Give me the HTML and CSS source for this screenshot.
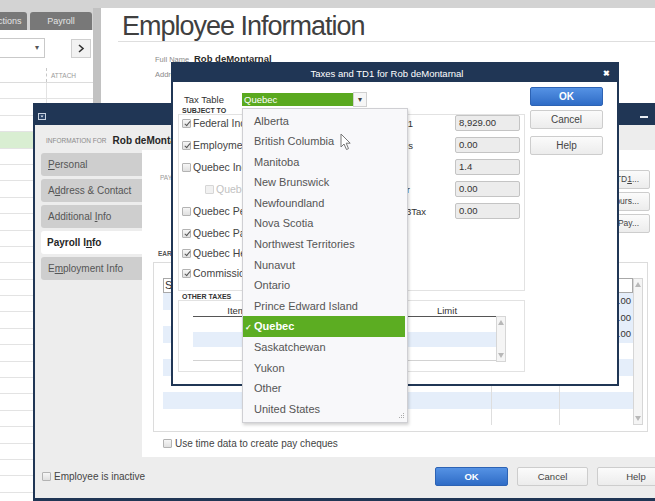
FILE: index.html
```html
<!DOCTYPE html>
<html>
<head>
    <meta charset="UTF-8" />
    <title>Employee Information</title>
    <link rel="stylesheet" href="styles.css">
</head>
<body>
    <div class="toolbar"></div>
    <div class="app-main">
        <div class="list-pane">
            <div class="pane-tabs">
                <span class="pane-tab cut">Transactions</span>
                <span class="pane-tab">Payroll</span>
            </div>
            <div class="pane-filter">
                <div class="pane-select">&#9662;</div>
                <div class="pane-next">
                    <svg width="8" height="9" viewBox="0 0 8 9"><path d="M2 1 L6 4.5 L2 8" fill="none" stroke="#333" stroke-width="1.6"/></svg>
                </div>
            </div>
            <div class="pane-head"><span class="pane-name"></span><span class="pane-attach">ATTACH</span></div>
            <div class="pane-row"><span class="pane-name"></span><span class="pane-attach"></span></div>
            <div class="pane-row"><span class="pane-name"></span><span class="pane-attach"></span></div>
            <div class="pane-row"><span class="pane-name"></span><span class="pane-attach"></span></div>
            <div class="pane-row picked"><span class="pane-name"></span><span class="pane-attach"></span></div>
            <div class="pane-row"><span class="pane-name"></span><span class="pane-attach"></span></div>
            <div class="pane-row"><span class="pane-name"></span><span class="pane-attach"></span></div>
            <div class="pane-row"><span class="pane-name"></span><span class="pane-attach"></span></div>
            <div class="pane-row"><span class="pane-name"></span><span class="pane-attach"></span></div>
            <div class="pane-row"><span class="pane-name"></span><span class="pane-attach"></span></div>
            <div class="pane-row"><span class="pane-name"></span><span class="pane-attach"></span></div>
            <div class="pane-row"><span class="pane-name"></span><span class="pane-attach"></span></div>
            <div class="pane-row"><span class="pane-name"></span><span class="pane-attach"></span></div>
            <div class="pane-row"><span class="pane-name"></span><span class="pane-attach"></span></div>
            <div class="pane-row"><span class="pane-name"></span><span class="pane-attach"></span></div>
            <div class="pane-row"><span class="pane-name"></span><span class="pane-attach"></span></div>
            <div class="pane-row"><span class="pane-name"></span><span class="pane-attach"></span></div>
            <div class="pane-row"><span class="pane-name"></span><span class="pane-attach"></span></div>
            <div class="pane-row"><span class="pane-name"></span><span class="pane-attach"></span></div>
            <div class="pane-row"><span class="pane-name"></span><span class="pane-attach"></span></div>
            <div class="pane-row"><span class="pane-name"></span><span class="pane-attach"></span></div>
            <div class="pane-row"><span class="pane-name"></span><span class="pane-attach"></span></div>
            <div class="pane-row"><span class="pane-name"></span><span class="pane-attach"></span></div>
            <div class="pane-row"><span class="pane-name"></span><span class="pane-attach"></span></div>
            <div class="pane-row"><span class="pane-name"></span><span class="pane-attach"></span></div>
            <div class="pane-row"><span class="pane-name"></span><span class="pane-attach"></span></div>
        </div>
        <div class="pane-scroll"></div>
        <div class="record">
            <h1 class="record-title">Employee Information</h1>
            <div class="record-field"><span class="record-label">Full Name</span><span class="record-value">Rob deMontarnal</span></div>
            <div class="record-field"><span class="record-label">Address</span></div>
        </div>
    </div>

    <!-- employee edit window -->
    <div class="window employee">
        <div class="titlebar emp-title">
            <svg class="sys-icon" width="8" height="7" viewBox="0 0 8 7"><rect x="0.5" y="0.5" width="7" height="6" fill="#2b4468" stroke="#c9d3e0"/><path d="M2.5 2.5 L5.5 2.5 L4 4.5 Z" fill="#dfe6ef"/></svg>
            <span class="minimize"></span>
        </div>
        <div class="emp-body">
            <div class="info-for"><span class="info-label">INFORMATION FOR</span><span class="info-name">Rob deMontarnal</span></div>
            <div class="emp-main">
                <div class="emp-tabs">
                    <div class="emp-tab"><u>P</u>ersonal</div>
                    <div class="emp-tab">A<u>d</u>dress &amp; Contact</div>
                    <div class="emp-tab">Additional <u>I</u>nfo</div>
                    <div class="emp-tab active">Payroll I<u>n</u>fo</div>
                    <div class="emp-tab">E<u>m</u>ployment Info</div>
                </div>
                <div class="emp-panel">
                    <div class="panel-top">
                        <div class="section-label">PAYROLL SCHEDULE</div>
                        <div class="side-buttons">
                            <div class="btn side">Taxes and TD<u>1</u>...</div>
                            <div class="btn side">Leave Hours...</div>
                            <div class="btn side">Direct Deposit Pay...</div>
                        </div>
                    </div>
                    <div class="section-label strong">EARNINGS</div>
                    <div class="earnings-box">
                        <div class="earn-table">
                            <div class="earn-row head"><span class="c1">S</span><span class="c2">Rate</span><span class="c3"></span></div>
                            <div class="earn-row alt"><span class="c1"></span><span class="c2"></span><span class="c3 hl">1,000.00</span></div>
                            <div class="earn-row"><span class="c1"></span><span class="c2"></span><span class="c3 hl">1,000.00</span></div>
                            <div class="earn-row alt"><span class="c1"></span><span class="c2"></span><span class="c3 hl">1,000.00</span></div>
                            <div class="earn-row"><span class="c1"></span><span class="c2"></span><span class="c3"></span></div>
                            <div class="earn-row alt"><span class="c1"></span><span class="c2"></span><span class="c3"></span></div>
                            <div class="earn-row"><span class="c1"></span><span class="c2"></span><span class="c3"></span></div>
                            <div class="earn-row alt"><span class="c1"></span><span class="c2"></span><span class="c3"></span></div>
                            <div class="earn-row"><span class="c1"></span><span class="c2"></span><span class="c3"></span></div>
                        </div>
                        <div class="scrollbar tall">
                            <span class="arrow up"></span>
                            <span class="arrow down"></span>
                        </div>
                    </div>
                    <div class="check-row time-data"><span class="cb"></span>Use time data to create pay cheques</div>
                </div>
            </div>
            <div class="emp-footer">
                <div class="check-row"><span class="cb"></span>Employee is inactive</div>
                <div class="footer-buttons">
                    <div class="btn primary ok">OK</div>
                    <div class="btn cancel">Cancel</div>
                    <div class="btn help">Help</div>
                </div>
            </div>
        </div>
    </div>

    <!-- taxes dialog -->
    <div class="window taxes">
        <div class="titlebar dialog-title">
            <span class="dialog-caption">Taxes and TD1 for Rob deMontarnal</span>
            <span class="close">&#10006;</span>
        </div>
        <div class="taxes-body">
            <div class="taxes-main">
                <div class="tax-table-row">
                    <span class="tax-label">Tax Table</span>
                    <div class="combo">
                        <span class="combo-value">Quebec</span>
                        <span class="combo-arrow">&#9662;</span>
                    </div>
                </div>
                <div class="group-label">SUBJECT TO</div>
                <div class="group-box subject">
                    <div class="subject-list">
                        <div class="check-row sub"><span class="cb on"></span>Federal Income</div>
                        <div class="check-row sub"><span class="cb on"></span>Employment</div>
                        <div class="check-row sub"><span class="cb"></span>Quebec Income</div>
                        <div class="check-row sub nested"><span class="cb"></span>Quebec</div>
                        <div class="check-row sub"><span class="cb"></span>Quebec Pension</div>
                        <div class="check-row sub tight"><span class="cb on"></span>Quebec Parental</div>
                        <div class="check-row sub tight"><span class="cb on"></span>Quebec Health</div>
                        <div class="check-row sub tight"><span class="cb on"></span>Commission</div>
                    </div>
                    <div class="claim-list">
                        <div class="claim"><span class="claim-label">TD1</span><span class="field">8,929.00</span></div>
                        <div class="claim"><span class="claim-label">Claims</span><span class="field">0.00</span></div>
                        <div class="claim"><span class="claim-label"></span><span class="field">1.4</span></div>
                        <div class="claim"><span class="claim-label short">Factor</span><span class="field">0.00</span></div>
                        <div class="claim"><span class="claim-label long">TP-1015.3Tax</span><span class="field">0.00</span></div>
                    </div>
                </div>
                <div class="group-label">OTHER TAXES</div>
                <div class="group-box other">
                    <div class="other-table">
                        <div class="other-row head"><span class="o1">Item</span><span class="o2">Rate</span><span class="o3">Limit</span></div>
                        <div class="other-row"></div>
                        <div class="other-row alt"></div>
                        <div class="other-row last"></div>
                    </div>
                    <div class="scrollbar short">
                        <span class="arrow up"></span>
                        <span class="arrow down"></span>
                    </div>
                </div>
            </div>
            <div class="taxes-buttons">
                <div class="btn primary">OK</div>
                <div class="btn cancel-small">Cancel</div>
                <div class="btn help-small">Help</div>
            </div>
        </div>
    </div>

    <!-- open drop-down list of the Tax Table combo -->
    <ul class="dropdown">
        <li><span class="tick"></span>Alberta</li>
        <li><span class="tick"></span>British Columbia</li>
        <li><span class="tick"></span>Manitoba</li>
        <li><span class="tick"></span>New Brunswick</li>
        <li><span class="tick"></span>Newfoundland</li>
        <li><span class="tick"></span>Nova Scotia</li>
        <li><span class="tick"></span>Northwest Territories</li>
        <li><span class="tick"></span>Nunavut</li>
        <li><span class="tick"></span>Ontario</li>
        <li><span class="tick"></span>Prince Edward Island</li>
        <li class="selected"><span class="tick">&#10003;</span>Quebec</li>
        <li><span class="tick"></span>Saskatchewan</li>
        <li><span class="tick"></span>Yukon</li>
        <li><span class="tick"></span>Other</li>
        <li><span class="tick"></span>United States</li>
        <svg class="grip" width="8" height="8" viewBox="0 0 8 8">
            <rect x="6" y="1" width="1" height="1" fill="#aaa"/><rect x="4" y="3" width="1" height="1" fill="#aaa"/>
            <rect x="6" y="3" width="1" height="1" fill="#aaa"/><rect x="2" y="5" width="1" height="1" fill="#aaa"/>
            <rect x="4" y="5" width="1" height="1" fill="#aaa"/><rect x="6" y="5" width="1" height="1" fill="#aaa"/>
        </svg>
    </ul>

    <svg class="cursor" width="12" height="18" viewBox="0 0 12 18">
        <path d="M1 1 L1 14 L4 11 L6.5 16.5 L8.5 15.6 L6.2 10.2 L10.2 10.2 Z" fill="#fff" stroke="#777" stroke-width="1" stroke-linejoin="round"/>
    </svg>
</body>
</html>
```

FILE: styles.css
```css
* {
    box-sizing: border-box;
}

body {
    margin: 0;
    width: 655px;
    height: 501px;
    overflow: hidden;
    position: relative;
    font-family: "Liberation Sans", Arial, sans-serif;
    color: #444;
    background: #ffffff;
}

/* background application */

.toolbar {
    height: 8px;
    background: #d3d3d3;
}

.app-main {
    display: flex;
    height: 493px;
}

.list-pane {
    width: 93px;
    flex: none;
}

.pane-tabs {
    height: 22px;
    background: #d3d3d3;
    display: flex;
    align-items: flex-end;
    gap: 3px;
    overflow: hidden;
}

.pane-tab {
    flex: none;
    width: 62px;
    height: 18px;
    line-height: 18px;
    text-align: center;
    font-size: 9px;
    color: #e4e4e4;
    background: #787878;
    border-radius: 3px 3px 0 0;
    white-space: nowrap;
}

.pane-tab.cut {
    margin-left: -35px;
}

.pane-filter {
    height: 38px;
    padding-top: 8px;
    display: flex;
    align-items: flex-start;
    justify-content: space-between;
}

.pane-select {
    width: 45px;
    height: 20px;
    border: 1px solid #c9c9c9;
    border-left: none;
    text-align: right;
    padding-right: 5px;
    font-size: 8px;
    line-height: 18px;
    color: #555;
}

.pane-next {
    width: 20px;
    height: 19px;
    margin: 1px 2px 0 0;
    border: 1px solid #cfcfcf;
    background: #f2f2f2;
    display: flex;
    align-items: center;
    justify-content: center;
}

.pane-head,
.pane-row {
    display: flex;
    height: 16.4px;
    border-bottom: 1px solid #e3e3e3;
}

.pane-head {
    height: 15px;
    border-bottom-color: #dcdcdc;
}

.pane-name {
    width: 46px;
}

.pane-attach {
    flex: 1;
    border-left: 1px solid #e3e3e3;
    font-size: 6.5px;
    line-height: 15px;
    padding-left: 4px;
    color: #9a9a9a;
}

.pane-head .pane-attach {
    border-left: 1px dashed #c8c8c8;
}

.pane-row.picked {
    background: #d9eed2;
}

.pane-scroll {
    width: 8px;
    flex: none;
    background: #c2c2c2;
}

.record {
    flex: 1;
    padding-left: 17px;
}

.record-title {
    margin: 0;
    height: 34px;
    line-height: 36px;
    padding-left: 4px;
    font-size: 27px;
    font-weight: normal;
    letter-spacing: -1px;
    color: #404040;
    border-bottom: 1px solid #dedede;
}

.record-field {
    display: flex;
    align-items: baseline;
    height: 16px;
    line-height: 16px;
    padding-left: 37px;
}

.record-field:first-of-type {
    margin-top: 9px;
}

.record-label {
    width: 39px;
    font-size: 7.5px;
    color: #8a8a8a;
}

.record-value {
    font-size: 9.5px;
    font-weight: bold;
    color: #2a2a2a;
}

/* shared window parts */

.window {
    position: absolute;
    background: #ffffff;
    border: 2px solid #203655;
}

.titlebar {
    background: #203655;
    color: #ffffff;
}

.btn {
    height: 19px;
    line-height: 17px;
    text-align: center;
    font-size: 10px;
    color: #444;
    border: 1px solid #cdcdcd;
    border-radius: 2px;
    background: linear-gradient(#fbfbfb, #ececec);
    white-space: nowrap;
    overflow: hidden;
}

.btn.primary {
    color: #ffffff;
    font-weight: bold;
    border-color: #2d63b4;
    background: linear-gradient(#5592e4, #2f6cc6);
}

.check-row {
    display: flex;
    align-items: center;
    gap: 3px;
    font-size: 10px;
    color: #444;
    white-space: nowrap;
}

.cb {
    position: relative;
    flex: none;
    width: 9px;
    height: 9px;
    border: 1px solid #b3b3b3;
    border-radius: 1px;
    background: linear-gradient(#f6f6f6, #e0e0e0);
}

.cb.on::after {
    content: "";
    position: absolute;
    left: 2.5px;
    top: 0;
    width: 2px;
    height: 5px;
    border: solid #555;
    border-width: 0 1.5px 1.5px 0;
    transform: rotate(40deg);
}

.scrollbar {
    position: relative;
    width: 10px;
    flex: none;
    border: 1px solid #d6d6d6;
    background: #f5f5f5;
}

.arrow {
    position: absolute;
    left: 1px;
    width: 0;
    height: 0;
    border-left: 3.5px solid transparent;
    border-right: 3.5px solid transparent;
}

.arrow.up {
    top: 3px;
    border-bottom: 5px solid #b8b8b8;
}

.arrow.down {
    bottom: 3px;
    border-top: 5px solid #b8b8b8;
}

/* employee window */

.employee {
    left: 33px;
    top: 103px;
    width: 632px;
    height: 398px;
    border-width: 0 2px 3px 2px;
    background: #ededed;
}

.emp-title {
    height: 22px;
    display: flex;
    align-items: center;
    justify-content: space-between;
    padding: 5px 15px 0 3px;
}

.minimize {
    width: 8px;
    height: 2px;
    background: #e8edf3;
}

.info-for {
    margin-top: 8px;
    height: 14px;
    padding-left: 11px;
    display: flex;
    align-items: center;
    gap: 6px;
}

.info-label {
    font-size: 6.5px;
    color: #8a8a8a;
}

.info-name {
    font-size: 10px;
    font-weight: bold;
    color: #262626;
}

.emp-main {
    margin-top: 3px;
    height: 307px;
    display: flex;
}

.emp-tabs {
    width: 101px;
    margin-left: 6px;
    padding-top: 3px;
    flex: none;
}

.emp-tab {
    height: 23px;
    margin-bottom: 3px;
    padding-left: 7px;
    line-height: 23px;
    font-size: 10px;
    color: #555;
    background: #cecece;
    border-radius: 3px 0 0 3px;
}

.emp-tab.active {
    background: #ffffff;
    font-weight: bold;
    color: #262626;
    padding-left: 6px;
}

.emp-panel {
    flex: 1;
    margin-right: 8px;
    background: #ffffff;
}

.panel-top {
    height: 100px;
    padding: 20px 5px 0 18px;
    display: flex;
    justify-content: space-between;
    align-items: flex-start;
}

.section-label {
    margin-top: 4px;
    font-size: 6.5px;
    color: #999;
}

.section-label.strong {
    margin: 0;
    height: 7px;
    line-height: 7px;
    padding-left: 16px;
    font-weight: bold;
    color: #555;
}

.side-buttons {
    display: flex;
    flex-direction: column;
    gap: 3px;
}

.btn.side {
    width: 105px;
    text-align: right;
    padding-right: 10px;
    font-size: 8.5px;
}

.earnings-box {
    margin: 5px 7px 0 11px;
    height: 170px;
    border: 1px solid #dcdcdc;
    padding: 15px 4px 0 9px;
    display: flex;
}

.earn-table {
    flex: 1;
}

.earn-row {
    display: flex;
    height: 16.5px;
    font-size: 9.5px;
    line-height: 16px;
    color: #333;
}

.earn-row.head {
    height: 15px;
    line-height: 13px;
}

.earn-row.head span {
    border: 1px solid #a8a8a8;
    border-left: none;
    background: #ffffff;
    text-align: center;
}

.earn-row.head .c1 {
    border-left: 1px solid #a8a8a8;
    text-align: left;
    padding-left: 1px;
    font-size: 11px;
}

.earn-row.alt {
    background: #e5eefa;
}

.c1 {
    width: 329px;
    border-right: 1px solid #dedede;
    overflow: hidden;
}

.c2 {
    width: 68px;
    border-right: 1px solid #dedede;
    overflow: hidden;
}

.c3 {
    flex: 1;
    text-align: right;
    padding-right: 2px;
    overflow: hidden;
}

.c3.hl {
    background: #e5eefa;
}

.scrollbar.tall {
    height: 147px;
}

.time-data {
    margin: 6px 0 0 21px;
    height: 10px;
}

.emp-footer {
    height: 41px;
    display: flex;
    align-items: center;
    justify-content: space-between;
    padding: 0 0 3px 7px;
}

.footer-buttons {
    display: flex;
    gap: 9px;
}

.footer-buttons .btn {
    font-size: 9.5px;
}

.footer-buttons .ok {
    width: 73px;
}

.footer-buttons .cancel {
    width: 71px;
}

.footer-buttons .help {
    width: 66px;
    padding-left: 12px;
}

/* taxes and TD1 dialog */

.taxes {
    left: 171px;
    top: 62px;
    width: 448px;
    height: 324px;
}

.dialog-title {
    height: 18px;
    display: flex;
    align-items: center;
}

.dialog-caption {
    flex: 1;
    text-align: center;
    font-size: 9.5px;
    padding-left: 4px;
}

.close {
    width: 20px;
    font-size: 8px;
    font-weight: bold;
    text-align: center;
    padding-right: 2px;
}

.taxes-body {
    display: flex;
    padding: 5px 14px 0 5px;
}

.taxes-main {
    width: 347px;
    flex: none;
}

.tax-table-row {
    margin-top: 5px;
    height: 15px;
    display: flex;
    align-items: center;
}

.tax-label {
    width: 64px;
    padding-left: 6px;
    font-size: 9.5px;
    color: #333;
}

.combo {
    display: flex;
    align-items: center;
}

.combo-value {
    width: 111px;
    height: 13px;
    line-height: 13px;
    padding-left: 2px;
    font-size: 9.5px;
    color: #ffffff;
    background: #5aa91f;
}

.combo-arrow {
    width: 14px;
    height: 15px;
    line-height: 14px;
    text-align: center;
    font-size: 8px;
    color: #444;
    border: 1px solid #d0d0d0;
    background: #f6f6f6;
}

.group-label {
    height: 7px;
    line-height: 7px;
    padding-left: 4px;
    font-size: 7px;
    font-weight: bold;
    color: #333;
}

.group-box {
    border: 1px solid #e2e2e2;
    display: flex;
}

.group-box.subject {
    height: 177px;
    margin-bottom: 2px;
}

.subject-list {
    width: 180px;
    padding-left: 3px;
    flex: none;
}

.check-row.sub {
    height: 22px;
    align-items: flex-start;
    padding-top: 2px;
    line-height: 12px;
    font-size: 10.5px;
    gap: 2px;
}

.check-row.sub .cb {
    margin-top: 2px;
}

.check-row.sub.tight {
    height: 20px;
}

.check-row.nested {
    padding-left: 23px;
    color: #c2c2c2;
}

.check-row.nested .cb {
    border-color: #d6d6d6;
    background: #f1f1f1;
}

.claim-list {
    flex: 1;
}

.claim {
    height: 22px;
    display: flex;
    align-items: flex-start;
}

.claim-label {
    flex: 1;
    display: flex;
    justify-content: flex-end;
    padding: 3px 42px 0 0;
    font-size: 9.5px;
    color: #333;
    white-space: nowrap;
}

.claim-label.short {
    padding-right: 45px;
}

.claim-label.long {
    padding-right: 29px;
}

.field {
    width: 65px;
    height: 16px;
    margin-right: 4px;
    padding-left: 3px;
    line-height: 14px;
    font-size: 9.5px;
    color: #333;
    border: 1px solid #c4c4c4;
    border-radius: 2px;
    background: #ececec;
}

.group-box.other {
    height: 72px;
    padding: 4px 0 0 14px;
}

.other-table {
    width: 303px;
}

.other-row {
    height: 15px;
}

.other-row.head {
    height: 12px;
    display: flex;
    font-size: 9.5px;
    line-height: 11px;
    color: #333;
    border-bottom: 1px solid #555;
}

.other-row.alt {
    background: #e5eefa;
}

.other-row.last {
    height: 14px;
    border-bottom: 1px solid #d2d2d2;
}

.o1 {
    width: 87px;
    text-align: center;
}

.o2 {
    width: 118px;
}

.o3 {
    flex: 1;
    text-align: center;
}

.scrollbar.short {
    margin-top: 11px;
    height: 46px;
}

.taxes-buttons {
    width: 73px;
    margin-left: 5px;
    flex: none;
}

.taxes-buttons .cancel-small {
    margin-top: 4px;
}

.taxes-buttons .help-small {
    margin-top: 7px;
}

/* drop-down list laid over the dialog */

.dropdown {
    position: absolute;
    left: 242px;
    top: 108px;
    width: 166px;
    height: 315px;
    margin: 0;
    padding: 1.5px 2px 0 0;
    list-style: none;
    background: #f8f8fa;
    border: 1px solid #cfcfd3;
    box-shadow: 1px 2px 3px rgba(0, 0, 0, 0.18);
}

.dropdown li {
    height: 20.6px;
    line-height: 20.6px;
    padding-left: 2px;
    font-size: 11px;
    color: #555;
    white-space: nowrap;
}

.tick {
    display: inline-block;
    width: 9px;
    font-size: 8px;
}

.dropdown li.selected {
    background: #5cad22;
    color: #ffffff;
    font-weight: bold;
}

.grip {
    position: absolute;
    right: 2px;
    bottom: 2px;
}

.cursor {
    position: absolute;
    left: 340px;
    top: 133px;
}
```
